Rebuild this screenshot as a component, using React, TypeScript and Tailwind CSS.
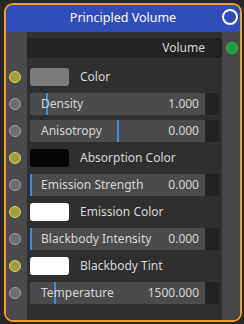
import React from "react"

type Row =
	| { kind: "color", label: string, swatch: string, socket: "yellow" }
	| { kind: "slider", label: string, value: string, marker: number, socket: "gray" }

const rows: Row[] = [
	{ kind: "color", label: "Color", swatch: "bg-[#7b7b7b]", socket: "yellow" },
	{ kind: "slider", label: "Density", value: "1.000", marker: 16, socket: "gray" },
	{ kind: "slider", label: "Anisotropy", value: "0.000", marker: 87, socket: "gray" },
	{ kind: "color", label: "Absorption Color", swatch: "bg-[#050505]", socket: "yellow" },
	{ kind: "slider", label: "Emission Strength", value: "0.000", marker: 0, socket: "gray" },
	{ kind: "color", label: "Emission Color", swatch: "bg-white", socket: "yellow" },
	{ kind: "slider", label: "Blackbody Intensity", value: "0.000", marker: 0, socket: "gray" },
	{ kind: "color", label: "Blackbody Tint", swatch: "bg-white", socket: "yellow" },
	{ kind: "slider", label: "Temperature", value: "1500.000", marker: 24, socket: "gray" },
]

function Socket({ type }: { type: "yellow" | "gray" | "green" }) {
	const cls =
		type === "yellow"
			? "bg-[#a29e3e] border-[#dcd656]"
			: type === "gray"
				? "bg-[#6e6e6e] border-[#a3a3a3]"
				: "bg-[#1c9a3c] border-[#33c258]"
	return <div className={`w-[12px] h-[12px] rounded-full border-[1.5px] ${cls}`}></div>
}

export default function App() {
	return (
		<div className="w-[244px] h-[324px] bg-[#282828] pt-[3px] pl-[4px] font-['Noto_Sans',sans-serif] text-[12px] text-[#d6d6d6]">
			<div className="w-[238px] h-[319px] border-2 border-[#f0a02c] rounded-[9px] overflow-hidden flex flex-col bg-[#2f2f2f]">
				{/* header */}
				<div className="h-[27px] shrink-0 bg-[#2f4cb8] flex items-center relative">
					<span className="w-full text-center text-white text-[12.5px] leading-none">Principled Volume</span>
					<div className="absolute right-[2px] top-[4px] w-[16px] h-[16px] rounded-full border-2 border-white bg-[#2f4cb8]"></div>
				</div>

				{/* body */}
				<div className="flex-1 flex">
					<div className="w-[21px] shrink-0 bg-[#4a4a4a] flex flex-col items-center pr-[3px]">
						<div className="h-[31px] shrink-0"></div>
						{rows.map((r, i) => (
							<div key={i} className="h-[27px] shrink-0 flex items-center">
								<Socket type={r.socket} />
							</div>
						))}
					</div>

					<div className="flex-1 flex flex-col pt-[6px]">
						<div className="h-[20px] bg-[#232323] flex items-center justify-end pr-[17px]">Volume</div>
						<div className="h-[5px]"></div>
						{rows.map((r, i) => (
							<div key={i} className="h-[27px] flex items-center pl-[3px]">
								{r.kind === "color" ? (
									<>
										<div className={`w-[39px] h-[18px] rounded-[3px] ${r.swatch}`}></div>
										<span className="ml-[11px]">{r.label}</span>
									</>
								) : (
									<>
										<div className="relative w-[175px] h-[22px] bg-[#4b4b4b] rounded-l-[2px] flex items-center justify-between pl-[11px] pr-[6px]">
											<div
												className="absolute top-0 bottom-0 w-[2px] bg-[#3d8fdc]"
												style={{ left: r.marker }}
											></div>
											<span className="relative">{r.label}</span>
											<span className="relative">{r.value}</span>
										</div>
										<div className="w-[14px] h-[22px] bg-[#222222]"></div>
									</>
								)}
							</div>
						))}
					</div>

					<div className="w-[18px] shrink-0 bg-[#464646] flex flex-col items-center pl-[1px]">
						<div className="h-[10px] shrink-0"></div>
						<Socket type="green" />
					</div>
				</div>
			</div>
		</div>
	)
}
